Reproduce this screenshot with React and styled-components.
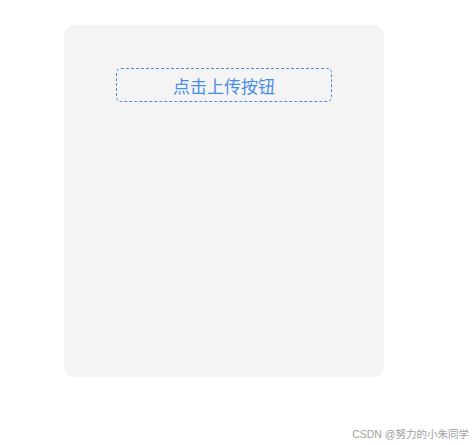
import styled, { createGlobalStyle } from "styled-components";

const GlobalStyle = createGlobalStyle`
  html, body {
    margin: 0;
    padding: 0;
    background: #ffffff;
  }
  body {
    font-family: "Noto Sans CJK SC", "Liberation Sans", sans-serif;
  }
`;

const Page = styled.div`
  position: relative;
  width: 474px;
  height: 445px;
  padding: 25px 0 0 64px;
  box-sizing: border-box;
`;

const Card = styled.section`
  width: 320px;
  height: 352px;
  background: #f4f4f4;
  border-radius: 10px;
  padding-top: 43px;
  box-sizing: border-box;
  display: flex;
  flex-direction: column;
  align-items: center;
`;

const UploadButton = styled.button`
  width: 216px;
  height: 34px;
  background: transparent;
  border: 1px dashed #4a8de4;
  border-radius: 5px;
  color: #4a8de4;
  font-family: "Noto Sans CJK SC", sans-serif;
  font-size: 17px;
  font-weight: 400;
  line-height: 1;
  cursor: pointer;
  display: flex;
  align-items: center;
  justify-content: center;
  padding: 0;
`;

const Watermark = styled.span`
  position: absolute;
  right: 5px;
  bottom: 4px;
  font-family: "Liberation Sans", "Noto Sans CJK SC", sans-serif;
  font-size: 10.5px;
  color: #a0a0a0;
`;

export default function App() {
  return (
    <>
      <GlobalStyle />
      <Page>
        <Card>
          <UploadButton>点击上传按钮</UploadButton>
        </Card>
        <Watermark>CSDN @努力的小朱同学</Watermark>
      </Page>
    </>
  );
}
